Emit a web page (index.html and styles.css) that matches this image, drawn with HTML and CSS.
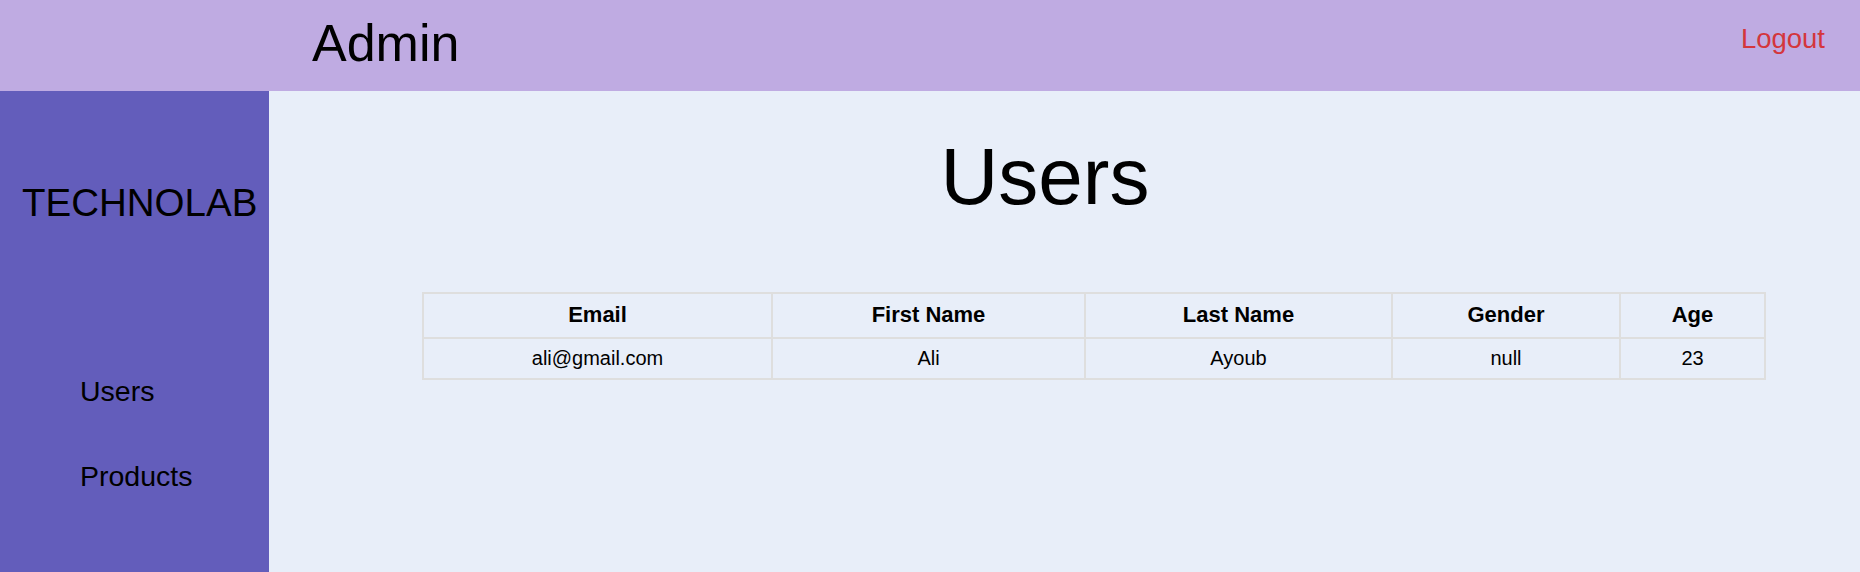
FILE: index.html
```html
<!DOCTYPE html>
<html lang="en">
<head>
<meta charset="utf-8">
<title>Admin - Users</title>
<link rel="stylesheet" href="styles.css">
</head>
<body>
<div class="app">
  <header class="topbar">
    <div class="topbar-title">Admin</div>
    <a class="logout" href="#">Logout</a>
  </header>
  <div class="body">
    <aside class="sidebar">
      <div class="brand">TECHNOLAB</div>
      <nav class="nav">
        <a class="nav-link" href="#">Users</a>
        <a class="nav-link" href="#">Products</a>
      </nav>
    </aside>
    <main class="main">
      <h1 class="page-title">Users</h1>
      <div class="table-wrap">
        <table class="users-table">
          <thead>
            <tr>
              <th class="c-email">Email</th>
              <th class="c-first">First Name</th>
              <th class="c-last">Last Name</th>
              <th class="c-gender">Gender</th>
              <th class="c-age">Age</th>
            </tr>
          </thead>
          <tbody>
            <tr>
              <td>ali@gmail.com</td>
              <td>Ali</td>
              <td>Ayoub</td>
              <td>null</td>
              <td>23</td>
            </tr>
          </tbody>
        </table>
      </div>
    </main>
  </div>
</div>
</body>
</html>
```

FILE: styles.css
```css
* { box-sizing: border-box; }

html, body {
  margin: 0;
  padding: 0;
  height: 100%;
}

body {
  font-family: "Liberation Sans", Arial, sans-serif;
  color: #000;
  background: #e8eef9;
}

.app {
  display: flex;
  flex-direction: column;
  height: 100vh;
}

.topbar {
  height: 91px;
  flex: 0 0 91px;
  background: #bfabe2;
  display: flex;
  align-items: flex-start;
  justify-content: space-between;
  padding: 0 35px 0 312px;
}

.topbar-title {
  font-size: 52px;
  line-height: 60px;
  margin-top: 13px;
}

.logout {
  font-size: 27.5px;
  line-height: 32px;
  margin-top: 23px;
  color: #d4363c;
  text-decoration: none;
}

.body {
  flex: 1;
  display: flex;
  min-height: 0;
}

.sidebar {
  width: 269px;
  flex: 0 0 269px;
  background: #635dbb;
  padding: 90px 0 0 22px;
}

.brand {
  font-size: 38.5px;
  line-height: 43px;
  white-space: nowrap;
}

.nav {
  display: flex;
  flex-direction: column;
  gap: 53px;
  margin-top: 151px;
  padding-left: 58px;
}

.nav-link {
  font-size: 28.5px;
  line-height: 32px;
  color: #000;
  text-decoration: none;
}

.main {
  flex: 1;
  display: flex;
  flex-direction: column;
}

.page-title {
  margin: 40px 39px 69px 0;
  font-size: 80px;
  line-height: 92px;
  font-weight: normal;
  text-align: center;
}

.table-wrap {
  padding: 0 94px 0 153px;
}

.users-table {
  width: 100%;
  border-collapse: separate;
  border-spacing: 0;
  border-top: 2px solid #dedede;
  border-left: 2px solid #dedede;
}

.users-table th,
.users-table td {
  border-right: 2px solid #dedede;
  border-bottom: 2px solid #dedede;
  text-align: center;
}

.users-table th {
  font-size: 22px;
  line-height: 25px;
  font-weight: bold;
  padding: 8px 4px 10px;
}

.users-table td {
  font-size: 20px;
  line-height: 23px;
  padding: 8px 4px;
}

.c-email { width: 349px; }
.c-first { width: 313px; }
.c-last { width: 307px; }
.c-gender { width: 228px; }
.c-age { width: 145px; }
```
